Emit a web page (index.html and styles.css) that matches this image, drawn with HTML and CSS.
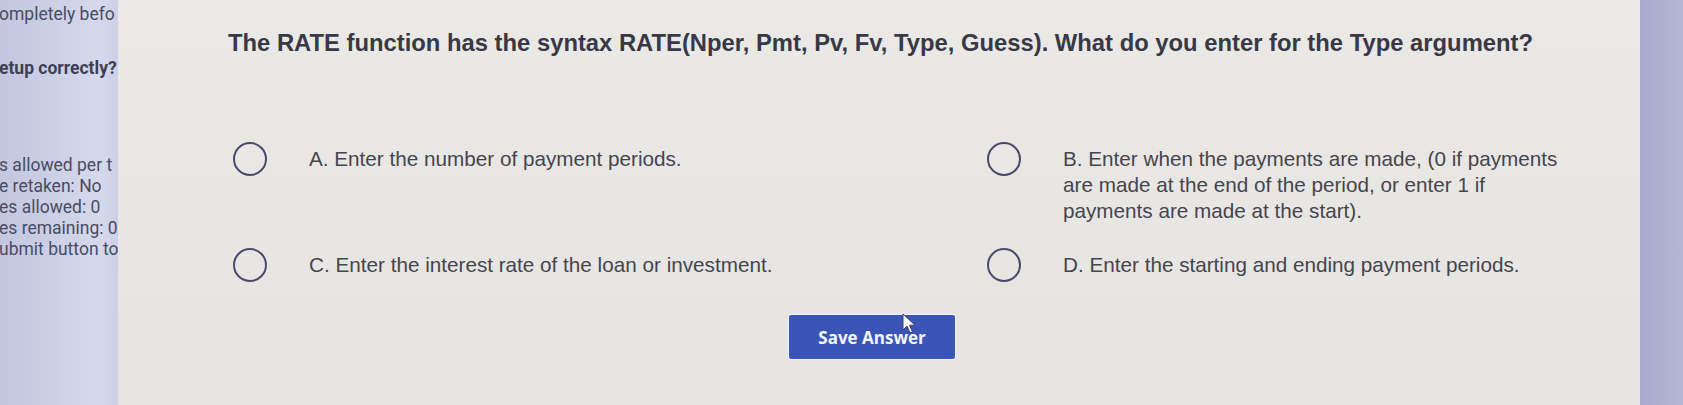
FILE: index.html
```html
<!DOCTYPE html>
<html lang="en">
<head>
<meta charset="utf-8">
<title>RATE question</title>
<link rel="stylesheet" href="styles.css">
</head>
<body>
<div class="screen">
  <aside class="sidebar">
    <div class="side-line side-top">ompletely befo</div>
    <div class="side-line side-bold">etup correctly?</div>
    <div class="side-info">
      <div class="side-line">s allowed per t</div>
      <div class="side-line">e retaken: No</div>
      <div class="side-line">es allowed: 0</div>
      <div class="side-line">es remaining: 0</div>
      <div class="side-line">ubmit button to</div>
    </div>
  </aside>
  <main class="main">
    <h1 class="question">The RATE function has the syntax RATE(Nper, Pmt, Pv, Fv, Type, Guess). What do you enter for the Type argument?</h1>
    <div class="options">
      <label class="option">
        <span class="radio"></span>
        <span class="opt-text">A. Enter the number of payment periods.</span>
      </label>
      <label class="option">
        <span class="radio"></span>
        <span class="opt-text opt-wrap">B. Enter when the payments are made, (0 if payments are made at the end of the period, or enter 1 if payments are made at the start).</span>
      </label>
      <label class="option">
        <span class="radio"></span>
        <span class="opt-text">C. Enter the interest rate of the loan or investment.</span>
      </label>
      <label class="option">
        <span class="radio"></span>
        <span class="opt-text">D. Enter the starting and ending payment periods.</span>
      </label>
    </div>
    <div class="actions">
      <button class="save" type="button">Save Answer
        <svg class="cursor" width="14" height="22" viewBox="0 0 14 22" aria-hidden="true">
          <path d="M1 1 L1 17 L5 13 L8 20 L10.5 19 L7.5 12.2 L13 12.2 Z" fill="#ffffff" stroke="#3a3f6a" stroke-width="1" stroke-linejoin="round"/>
        </svg>
      </button>
    </div>
  </main>
  <div class="edge"></div>
</div>
</body>
</html>
```
FILE: styles.css
```css
html, body {
  margin: 0;
  padding: 0;
  width: 1683px;
  height: 405px;
  overflow: hidden;
  background: #e7e6e2;
}

.screen {
  display: grid;
  grid-template-columns: 118px 1fr 43px;
  width: 1683px;
  height: 405px;
}

.sidebar {
  background: linear-gradient(to right, #c3c6df 0%, #ccd0e6 45%, #d6d9ec 85%, #cdd0e6 100%);
  overflow: hidden;
  font-family: Roboto, "Liberation Sans", sans-serif;
  font-size: 17.5px;
  color: #4a4c64;
  padding-top: 4px;
}

.side-line {
  white-space: nowrap;
  line-height: 21px;
  margin-left: -1px;
}

.side-bold {
  font-weight: 700;
  color: #3d3f58;
  margin-top: 33px;
}

.side-info {
  margin-top: 76px;
}

.main {
  background: linear-gradient(to bottom, #eae9e6 0%, #e7e6e2 60%, #e5e4e0 100%);
  padding: 28px 0 0 110px;
}

.question {
  margin: 0;
  font-family: "Liberation Sans", Arial, sans-serif;
  font-weight: 700;
  font-size: 23.8px;
  line-height: 30px;
  color: #393846;
  white-space: nowrap;
}

.options {
  display: grid;
  grid-template-columns: 754px 600px;
  row-gap: 28px;
  margin-top: 88px;
  margin-left: 5px;
  font-family: "Liberation Sans", Arial, sans-serif;
  font-size: 20.7px;
  line-height: 26px;
  color: #46454f;
}

.option {
  display: flex;
  align-items: flex-start;
  gap: 42px;
}

.radio {
  flex: 0 0 auto;
  width: 30px;
  height: 30px;
  border: 2.5px solid #4b4a6c;
  border-radius: 50%;
  margin-top: -4px;
}

.opt-wrap {
  flex: 0 0 510px;
}

.actions {
  display: flex;
  justify-content: flex-start;
  padding-left: 561px;
  margin-top: 33px;
}

.save {
  position: relative;
  width: 166px;
  height: 44px;
  border: 0;
  border-radius: 2px;
  background: #3a55b6;
  color: #f4f5fb;
  font-family: "Open Sans", "Liberation Sans", sans-serif;
  font-weight: 700;
  font-size: 17px;
  padding: 0;
  box-shadow: 0 0 0 1px #f2f2f2;
}

.cursor {
  position: absolute;
  left: 113px;
  top: -2px;
}

.edge {
  background: linear-gradient(to right, #a6a8cd 0%, #aeb0d2 40%, #b4b6d6 100%);
}
```
